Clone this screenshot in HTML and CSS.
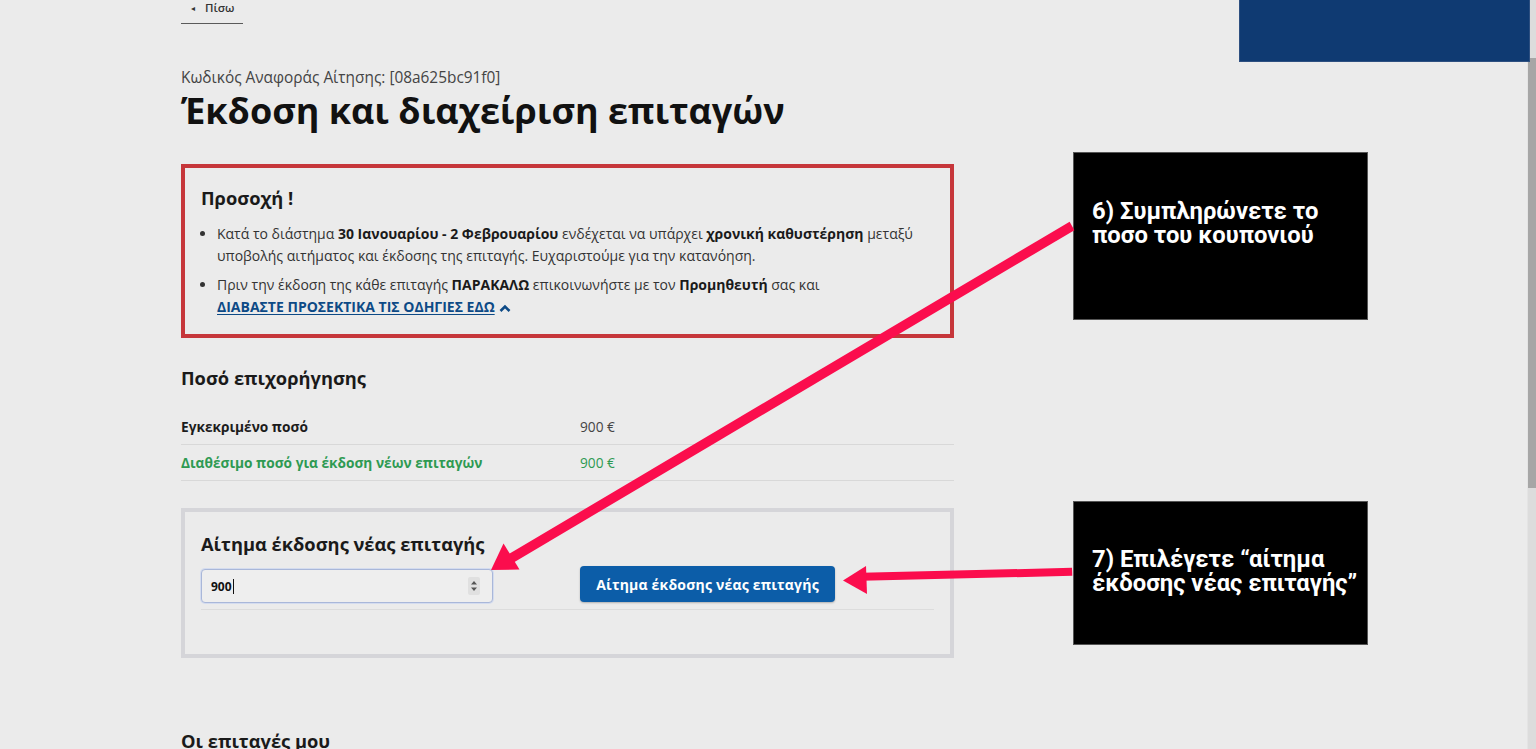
FILE: index.html
```html
<!DOCTYPE html>
<html lang="el">
<head>
<meta charset="utf-8">
<title>Έκδοση και διαχείριση επιταγών</title>
<link rel="stylesheet" href="styles.css">
</head>
<body>
<div class="window">
  <main class="page">
    <nav class="back"><a href="#"><span class="back-arrow">◂</span>Πίσω</a></nav>
    <p class="ref">Κωδικός Αναφοράς Αίτησης: [08a625bc91f0]</p>
    <h1 class="title">Έκδοση και διαχείριση επιταγών</h1>

    <section class="alert">
      <h2 class="alert-title">Προσοχή !</h2>
      <ul class="alert-list">
        <li>Κατά το διάστημα <b>30 Ιανουαρίου - 2 Φεβρουαρίου</b> ενδέχεται να υπάρχει <b>χρονική καθυστέρηση</b> μεταξύ υποβολής αιτήματος και έκδοσης της επιταγής. Ευχαριστούμε για την κατανόηση.</li>
        <li>Πριν την έκδοση της κάθε επιταγής <b>ΠΑΡΑΚΑΛΩ</b> επικοινωνήστε με τον <b>Προμηθευτή</b> σας και <span class="guide-wrap"><a class="guide" href="#">ΔΙΑΒΑΣΤΕ ΠΡΟΣΕΚΤΙΚΑ ΤΙΣ ΟΔΗΓΙΕΣ ΕΔΩ</a><svg class="chev" viewBox="0 0 12 8" width="12" height="8"><path d="M1.5 7 L6 2.5 L10.5 7" fill="none" stroke="#0d4a86" stroke-width="2.6"/></svg></span></li>
      </ul>
    </section>

    <h2 class="section-title">Ποσό επιχορήγησης</h2>
    <dl class="amounts">
      <div class="row">
        <dt>Εγκεκριμένο ποσό</dt>
        <dd>900 €</dd>
      </div>
      <div class="row available">
        <dt>Διαθέσιμο ποσό για έκδοση νέων επιταγών</dt>
        <dd>900 €</dd>
      </div>
    </dl>

    <section class="request">
      <h2 class="request-title">Αίτημα έκδοσης νέας επιταγής</h2>
      <div class="request-row">
        <div class="field">
          <span class="field-value">900</span><span class="caret"></span>
          <span class="spin"><svg viewBox="0 0 10 14" width="10" height="14"><path d="M5 2 L8 5.5 H2 Z M5 12 L8 8.5 H2 Z" fill="#555"/></svg></span>
        </div>
        <button class="submit" type="button">Αίτημα έκδοσης νέας επιταγής</button>
      </div>
    </section>

    <h2 class="section-title mine">Οι επιταγές μου</h2>
  </main>

  <div class="scrollbar">
    <span class="scroll-up"></span>
    <div class="thumb"></div>
    <span class="scroll-down"></span>
  </div>

  <div class="banner"></div>

  <div class="note note-one">6) Συμπληρώνετε το<br>ποσο του κουπονιού</div>
  <div class="note note-two">7) Επιλέγετε “αίτημα<br>έκδοσης νέας επιταγής”</div>

  <svg class="arrows" width="1536" height="749" viewBox="0 0 1536 749">
    <g fill="#fb0d4d" stroke="none">
      <path d="M1069.6 221.8 L1074.4 230.2 L512 563.4 L507.2 555 Z"/>
      <path d="M491 570 L503.5 543.5 L519.5 569.5 Z"/>
      <path d="M1072 567.8 L1072.3 575.8 L862 580.8 L861.7 572.8 Z"/>
      <path d="M843 580.5 L866 566 L867 594 Z"/>
    </g>
  </svg>
</div>
</body>
</html>
```

FILE: styles.css
```css
* {
  box-sizing: border-box;
}

html,
body {
  margin: 0;
  padding: 0;
}

body {
  background: #ebebeb;
  font-family: "Open Sans", "Noto Sans", "DejaVu Sans", sans-serif;
  color: #1c1c1c;
}

.window {
  position: relative;
  display: grid;
  grid-template-columns: 1fr 9px;
  height: 749px;
  overflow: hidden;
}

/* ---------- page content ---------- */

.page {
  padding-left: 181px;
  width: 954px;
  box-sizing: content-box;
  max-width: 773px;
}

.back {
  display: flex;
  height: 24px;
  line-height: 16px;
}

.back a {
  display: block;
  height: 24px;
  padding: 0 9px 0 10px;
  font-size: 11.5px;
  font-weight: 600;
  line-height: 15px;
  color: #333;
  text-decoration: none;
  border-bottom: 1px solid #5a5a5a;
}

.back-arrow {
  font-size: 8px;
  margin-right: 10px;
  position: relative;
  top: -1px;
}

.ref {
  margin: 44px 0 0;
  font-size: 15.4px;
  line-height: 20px;
  color: #444;
}

.title {
  margin: 0;
  font-size: 36px;
  line-height: 46px;
  font-weight: 700;
  color: #111;
}

.alert {
  margin-top: 30px;
  border: 4px solid #c6363a;
  padding: 18px 16px 16px;
  height: 174px;
}

.alert-title {
  margin: 0 0 13px;
  font-size: 18.3px;
  line-height: 24px;
  font-weight: 700;
  color: #1a1a1a;
}

.alert-list {
  margin: 0;
  padding-left: 16px;
  font-size: 14px;
  line-height: 22px;
  color: #333;
}

.alert-list li {
  margin-bottom: 7px;
}

.alert-list b {
  color: #1a1a1a;
}

.guide-wrap {
  display: inline-block;
}

.guide {
  color: #0d4a86;
  font-weight: 700;
  text-decoration: underline;
  text-underline-offset: 2px;
}

.chev {
  margin-left: 4px;
  vertical-align: 0;
}

.section-title {
  margin: 28px 0 0;
  font-size: 18.3px;
  line-height: 24px;
  font-weight: 700;
  color: #1a1a1a;
}

.amounts {
  margin: 19px 0 0;
}

.row {
  display: grid;
  grid-template-columns: 399px 1fr;
  align-items: center;
  height: 36px;
  border-bottom: 1px solid #d8d8d8;
  font-size: 13.7px;
}

.row dt {
  font-weight: 700;
  color: #1c1c1c;
}

.row dd {
  margin: 0;
  color: #444;
}

.available dt,
.available dd {
  color: #2e9a52;
}

.request {
  margin-top: 27px;
  border: 4px solid #d5d5d9;
  padding: 20px 16px 0;
  height: 150px;
}

.request-title {
  margin: 0 0 9px;
  font-size: 18.3px;
  line-height: 24px;
  font-weight: 700;
  color: #1a1a1a;
}

.request-row {
  display: grid;
  grid-template-columns: 379px auto;
  align-items: center;
  justify-content: start;
  padding-bottom: 6px;
  border-bottom: 1px solid #dcdcdc;
}

.field {
  display: flex;
  align-items: center;
  width: 292px;
  height: 34px;
  margin-top: 4px;
  padding: 0 8px 0 9px;
  border: 1px solid #a9b7d9;
  border-radius: 4px;
  box-shadow: 0 0 0 1px #d4dcef;
  background: #eeeeee;
  font-size: 12px;
  font-weight: 700;
  color: #111;
}

.caret {
  width: 1px;
  height: 15px;
  background: #111;
  margin-left: 1px;
}

.spin {
  margin-left: auto;
  margin-right: 4px;
  display: flex;
  background: #e0e0e0;
  border-radius: 2px;
  padding: 2px 1px;
}

.submit {
  height: 36px;
  width: 255px;
  border: none;
  border-radius: 4px;
  background: #0c5da8;
  color: #fff;
  font-family: inherit;
  font-size: 14px;
  font-weight: 700;
  letter-spacing: 0.2px;
  box-shadow: 0 1px 2px rgba(0, 0, 0, 0.25);
}

.mine {
  margin-top: 71px;
}

/* ---------- window scrollbar ---------- */

.scrollbar {
  display: flex;
  flex-direction: column;
  background: #dcdcdc;
  border-left: 1px solid #e4e4e4;
}

.scroll-up,
.scroll-down {
  height: 10px;
}

.thumb {
  margin-top: 48px;
  height: 430px;
  background: #a6a6a6;
}

.scroll-down {
  margin-top: auto;
}

/* ---------- overlays ---------- */

.banner {
  position: absolute;
  top: 0;
  left: 1239px;
  width: 291px;
  height: 62px;
  background: #0f3a72;
  border: 1px solid #2d4f80;
  border-top: none;
}

.note {
  position: absolute;
  left: 1073px;
  width: 295px;
  background: #000;
  border: 1px solid #555;
  color: #fff;
  font-family: Roboto, "Noto Sans", sans-serif;
  font-weight: 700;
  font-size: 23.8px;
  line-height: 24px;
  padding-left: 18px;
}

.note-one {
  top: 152px;
  height: 168px;
  padding-top: 46px;
}

.note-two {
  top: 501px;
  height: 144px;
  padding-top: 45px;
}

.arrows {
  position: absolute;
  top: 0;
  left: 0;
  pointer-events: none;
}
```
